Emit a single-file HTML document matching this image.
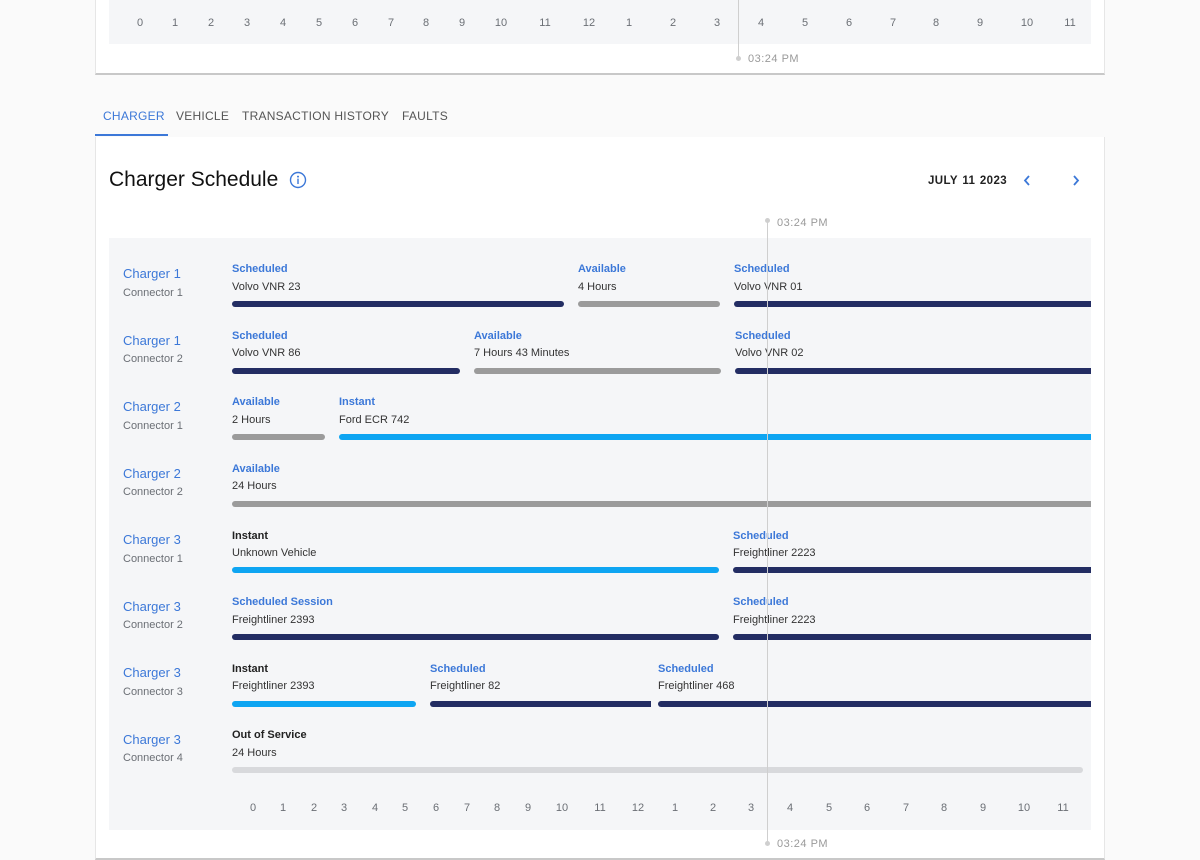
<!DOCTYPE html>
<html><head><meta charset="utf-8"><style>
*{margin:0;padding:0;box-sizing:border-box}
body{width:1200px;height:860px;background:#fafafa;font-family:"Liberation Sans",sans-serif;position:relative;overflow:hidden}
.a{position:absolute}
.card{position:absolute;background:#fff;left:95px;width:1010px;border-right:1px solid #e6e6e6;border-left:1px solid #e6e6e6}
.panel{position:absolute;background:#f5f6f8}
.tk{position:absolute;font-size:11px;color:#6b6f75;transform:translateX(-50%)}
.t{position:absolute;font-size:11px;font-weight:bold;color:#3c78d8;margin-top:1px}
.t.k{color:#222}
.s{position:absolute;font-size:11px;color:#333;margin-top:1px}
.b{position:absolute;height:6px;border-radius:3px}
.n{background:#232d63}.g{background:#9b9b9b}.l{background:#0ea5f2}.lg{background:#d8d9dc}
.cn{position:absolute;left:123px;font-size:13px;color:#3c78d8;margin-top:1px}
.cc{position:absolute;left:123px;font-size:11px;color:#6b6f75;margin-top:1px}
.tab{position:absolute;top:109px;font-size:12px;color:#555;letter-spacing:.25px}
</style></head><body>
<div class="card" style="top:0;height:75px;border-bottom:2px solid #c8c8c8"></div>
<div class="panel" style="left:109px;top:0;width:982px;height:44px"></div>
<div class="tk" style="left:140px;top:17px">0</div><div class="tk" style="left:175px;top:17px">1</div><div class="tk" style="left:211px;top:17px">2</div><div class="tk" style="left:247px;top:17px">3</div><div class="tk" style="left:283px;top:17px">4</div><div class="tk" style="left:319px;top:17px">5</div><div class="tk" style="left:355px;top:17px">6</div><div class="tk" style="left:391px;top:17px">7</div><div class="tk" style="left:426px;top:17px">8</div><div class="tk" style="left:462px;top:17px">9</div><div class="tk" style="left:501px;top:17px">10</div><div class="tk" style="left:545px;top:17px">11</div><div class="tk" style="left:589px;top:17px">12</div><div class="tk" style="left:629px;top:17px">1</div><div class="tk" style="left:673px;top:17px">2</div><div class="tk" style="left:717px;top:17px">3</div><div class="tk" style="left:761px;top:17px">4</div><div class="tk" style="left:805px;top:17px">5</div><div class="tk" style="left:849px;top:17px">6</div><div class="tk" style="left:893px;top:17px">7</div><div class="tk" style="left:936px;top:17px">8</div><div class="tk" style="left:980px;top:17px">9</div><div class="tk" style="left:1027px;top:17px">10</div><div class="tk" style="left:1070px;top:17px">11</div>
<div class="a" style="left:738px;top:0;width:1px;height:58px;background:#cfcfcf"></div>
<div class="a" style="left:736px;top:56px;width:5px;height:5px;border-radius:50%;background:#cfcfcf"></div>
<div class="a" style="left:748px;top:53px;font-size:11px;color:#9a9a9a;letter-spacing:.5px">03:24 PM</div>

<div class="tab" style="left:103px;color:#3c78d8">CHARGER</div>
<div class="a" style="left:95px;top:134px;width:73px;height:2px;background:#3c78d8"></div>
<div class="tab" style="left:176px">VEHICLE</div>
<div class="tab" style="left:242px">TRANSACTION HISTORY</div>
<div class="tab" style="left:402px">FAULTS</div>

<div class="card" style="top:137px;height:723px;border-bottom:2px solid #c8c8c8"></div>
<div class="a" style="left:109px;top:168px;font-size:21px;color:#111">Charger Schedule</div>
<svg class="a" style="left:289px;top:171px" width="18" height="18" viewBox="0 0 18 18"><circle cx="9" cy="9" r="7.5" fill="none" stroke="#3c78d8" stroke-width="1.4"/><circle cx="9" cy="5.6" r="1" fill="#3c78d8"/><rect x="8.3" y="7.6" width="1.4" height="5.4" fill="#3c78d8"/></svg>
<div class="a" style="left:928px;top:175px;font-size:11.5px;font-weight:bold;color:#222;letter-spacing:.4px;word-spacing:1px">JULY 11 2023</div>
<svg class="a" style="left:1021px;top:174px" width="12" height="13" viewBox="0 0 12 13"><path d="M8 2L4 6.5L8 11" fill="none" stroke="#3c78d8" stroke-width="1.8"/></svg>
<svg class="a" style="left:1070px;top:174px" width="12" height="13" viewBox="0 0 12 13"><path d="M4 2L8 6.5L4 11" fill="none" stroke="#3c78d8" stroke-width="1.8"/></svg>

<div class="panel" style="left:109px;top:238px;width:982px;height:592px"></div>

<div class="cn" style="top:265px">Charger 1</div><div class="cc" style="top:286px">Connector 1</div>
<div class="cn" style="top:332px">Charger 1</div><div class="cc" style="top:352px">Connector 2</div>
<div class="cn" style="top:398px">Charger 2</div><div class="cc" style="top:419px">Connector 1</div>
<div class="cn" style="top:465px">Charger 2</div><div class="cc" style="top:485px">Connector 2</div>
<div class="cn" style="top:531px">Charger 3</div><div class="cc" style="top:552px">Connector 1</div>
<div class="cn" style="top:598px">Charger 3</div><div class="cc" style="top:618px">Connector 2</div>
<div class="cn" style="top:664px">Charger 3</div><div class="cc" style="top:685px">Connector 3</div>
<div class="cn" style="top:731px">Charger 3</div><div class="cc" style="top:751px">Connector 4</div>

<div class="t" style="left:232px;top:262px">Scheduled</div><div class="s" style="left:232px;top:280px">Volvo VNR 23</div><div class="b n" style="left:232px;top:301px;width:332px"></div>
<div class="t" style="left:578px;top:262px">Available</div><div class="s" style="left:578px;top:280px">4 Hours</div><div class="b g" style="left:578px;top:301px;width:142px"></div>
<div class="t" style="left:734px;top:262px">Scheduled</div><div class="s" style="left:734px;top:280px">Volvo VNR 01</div><div class="b n" style="left:734px;top:301px;width:357px;border-radius:3px 0 0 3px"></div>
<div class="t" style="left:232px;top:329px">Scheduled</div><div class="s" style="left:232px;top:346px">Volvo VNR 86</div><div class="b n" style="left:232px;top:368px;width:228px"></div>
<div class="t" style="left:474px;top:329px">Available</div><div class="s" style="left:474px;top:346px">7 Hours 43 Minutes</div><div class="b g" style="left:474px;top:368px;width:247px"></div>
<div class="t" style="left:735px;top:329px">Scheduled</div><div class="s" style="left:735px;top:346px">Volvo VNR 02</div><div class="b n" style="left:735px;top:368px;width:356px;border-radius:3px 0 0 3px"></div>
<div class="t" style="left:232px;top:395px">Available</div><div class="s" style="left:232px;top:413px">2 Hours</div><div class="b g" style="left:232px;top:434px;width:93px"></div>
<div class="t" style="left:339px;top:395px">Instant</div><div class="s" style="left:339px;top:413px">Ford ECR 742</div><div class="b l" style="left:339px;top:434px;width:752px;border-radius:3px 0 0 3px"></div>
<div class="t" style="left:232px;top:462px">Available</div><div class="s" style="left:232px;top:479px">24 Hours</div><div class="b g" style="left:232px;top:501px;width:859px;border-radius:3px 0 0 3px"></div>
<div class="t k" style="left:232px;top:529px">Instant</div><div class="s" style="left:232px;top:546px">Unknown Vehicle</div><div class="b l" style="left:232px;top:567px;width:487px"></div>
<div class="t" style="left:733px;top:529px">Scheduled</div><div class="s" style="left:733px;top:546px">Freightliner 2223</div><div class="b n" style="left:733px;top:567px;width:358px;border-radius:3px 0 0 3px"></div>
<div class="t" style="left:232px;top:595px">Scheduled Session</div><div class="s" style="left:232px;top:613px">Freightliner 2393</div><div class="b n" style="left:232px;top:634px;width:487px"></div>
<div class="t" style="left:733px;top:595px">Scheduled</div><div class="s" style="left:733px;top:613px">Freightliner 2223</div><div class="b n" style="left:733px;top:634px;width:358px;border-radius:3px 0 0 3px"></div>
<div class="t k" style="left:232px;top:662px">Instant</div><div class="s" style="left:232px;top:679px">Freightliner 2393</div><div class="b l" style="left:232px;top:701px;width:184px"></div>
<div class="t" style="left:430px;top:662px">Scheduled</div><div class="s" style="left:430px;top:679px">Freightliner 82</div><div class="b n" style="left:430px;top:701px;width:221px;border-radius:3px 0 0 3px"></div>
<div class="t" style="left:658px;top:662px">Scheduled</div><div class="s" style="left:658px;top:679px">Freightliner 468</div><div class="b n" style="left:658px;top:701px;width:433px;border-radius:3px 0 0 3px"></div>
<div class="t k" style="left:232px;top:728px">Out of Service</div><div class="s" style="left:232px;top:746px">24 Hours</div><div class="b lg" style="left:232px;top:767px;width:851px"></div>

<div class="tk" style="left:253px;top:802px">0</div><div class="tk" style="left:283px;top:802px">1</div><div class="tk" style="left:314px;top:802px">2</div><div class="tk" style="left:344px;top:802px">3</div><div class="tk" style="left:375px;top:802px">4</div><div class="tk" style="left:405px;top:802px">5</div><div class="tk" style="left:436px;top:802px">6</div><div class="tk" style="left:467px;top:802px">7</div><div class="tk" style="left:497px;top:802px">8</div><div class="tk" style="left:528px;top:802px">9</div><div class="tk" style="left:562px;top:802px">10</div><div class="tk" style="left:600px;top:802px">11</div><div class="tk" style="left:638px;top:802px">12</div><div class="tk" style="left:675px;top:802px">1</div><div class="tk" style="left:713px;top:802px">2</div><div class="tk" style="left:751px;top:802px">3</div><div class="tk" style="left:790px;top:802px">4</div><div class="tk" style="left:829px;top:802px">5</div><div class="tk" style="left:867px;top:802px">6</div><div class="tk" style="left:906px;top:802px">7</div><div class="tk" style="left:944px;top:802px">8</div><div class="tk" style="left:983px;top:802px">9</div><div class="tk" style="left:1024px;top:802px">10</div><div class="tk" style="left:1063px;top:802px">11</div>

<div class="a" style="left:767px;top:220px;width:1px;height:624px;background:#cfcfcf"></div>
<div class="a" style="left:765px;top:218px;width:5px;height:5px;border-radius:50%;background:#cfcfcf"></div>
<div class="a" style="left:765px;top:841px;width:5px;height:5px;border-radius:50%;background:#cfcfcf"></div>
<div class="a" style="left:777px;top:217px;font-size:11px;color:#9a9a9a;letter-spacing:.5px">03:24 PM</div>
<div class="a" style="left:777px;top:838px;font-size:11px;color:#9a9a9a;letter-spacing:.5px">03:24 PM</div>
</body></html>
